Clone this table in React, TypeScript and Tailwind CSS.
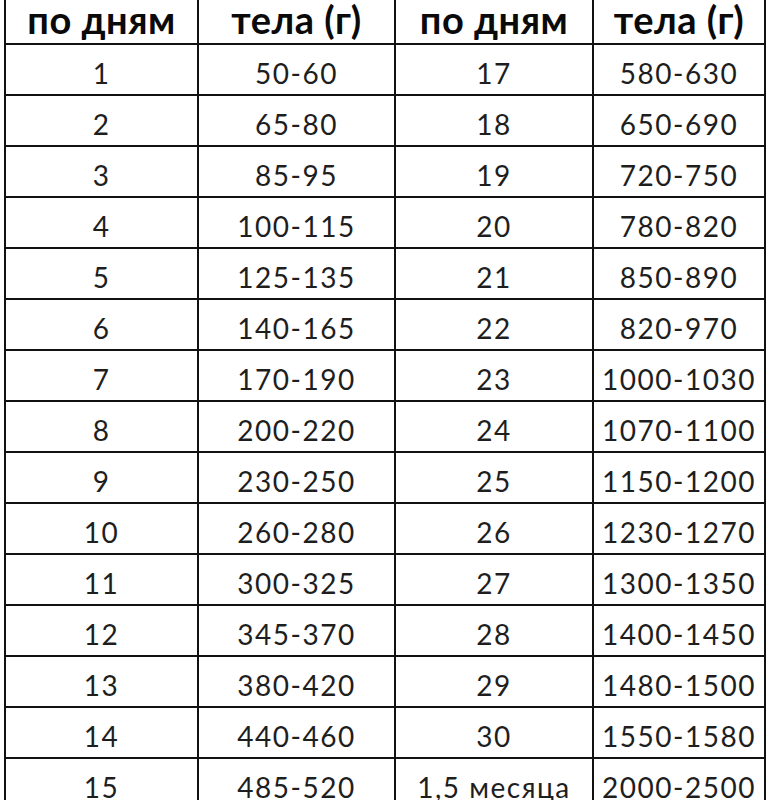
import React from "react";

const rows: [string, string, string, string][] = [
  ["1", "50-60", "17", "580-630"],
  ["2", "65-80", "18", "650-690"],
  ["3", "85-95", "19", "720-750"],
  ["4", "100-115", "20", "780-820"],
  ["5", "125-135", "21", "850-890"],
  ["6", "140-165", "22", "820-970"],
  ["7", "170-190", "23", "1000-1030"],
  ["8", "200-220", "24", "1070-1100"],
  ["9", "230-250", "25", "1150-1200"],
  ["10", "260-280", "26", "1230-1270"],
  ["11", "300-325", "27", "1300-1350"],
  ["12", "345-370", "28", "1400-1450"],
  ["13", "380-420", "29", "1480-1500"],
  ["14", "440-460", "30", "1550-1580"],
  ["15", "485-520", "1,5 месяца", "2000-2500"],
];

const cols = "grid grid-cols-[193px_197px_198px_172px]";

export default function App() {
  return (
    <div className="w-[772px] h-[800px] overflow-hidden bg-white">
      <div className="ml-[4px] w-[762px] border-l-2 border-[#111]">
        <div className={cols + " h-[45px] border-b-2 border-[#111]"}>
          {["по дням", "тела (г)", "по дням", "тела (г)"].map((t, i) => (
            <div
              key={i}
              className="border-r-2 border-[#111] flex items-end justify-center pb-[10px] text-[38px] leading-none font-bold tracking-[0.5px] text-[#0a0a0a] font-['Lato','Noto_Sans',sans-serif]"
            >
              {t}
            </div>
          ))}
        </div>
        {rows.map((r, ri) => (
          <div key={ri} className={cols + " h-[51px] border-b-2 border-[#111]"}>
            {r.map((t, i) => (
              <div
                key={i}
                className="border-r-2 border-[#111] flex items-center justify-center pt-[6px] text-[28px] leading-none text-[#1e1e1e] tracking-[1.5px] font-['Lato','Noto_Sans',sans-serif]"
              >
                {t}
              </div>
            ))}
          </div>
        ))}
      </div>
    </div>
  );
}
